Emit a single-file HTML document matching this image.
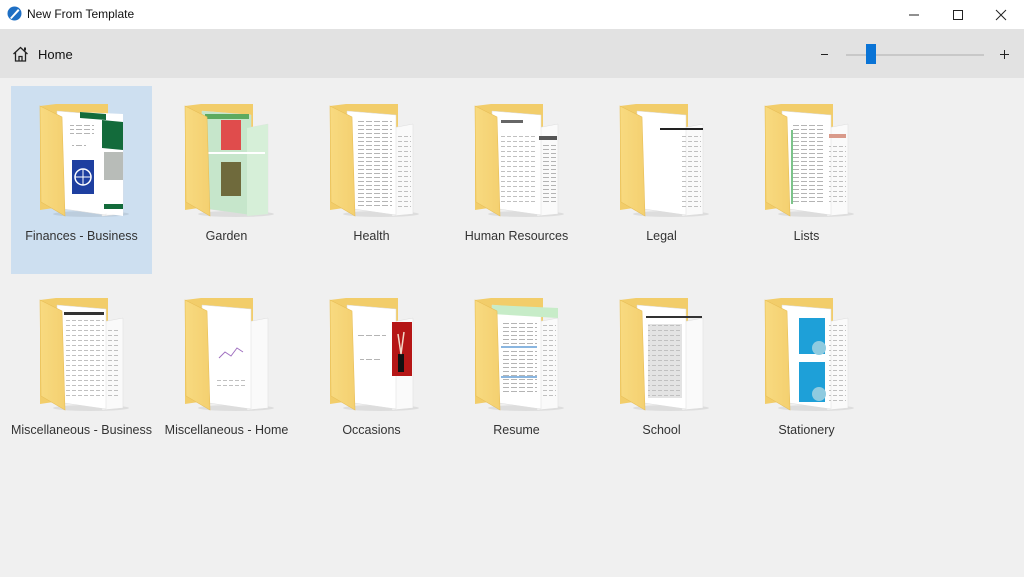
<!DOCTYPE html>
<html><head><meta charset="utf-8"><style>
*{margin:0;padding:0;box-sizing:border-box}
body{width:1024px;height:577px;background:#f0f0f0;font-family:"Segoe UI","Liberation Sans",sans-serif;overflow:hidden;position:relative;color:#222}
.title{position:absolute;left:0;top:0;width:1024px;height:29px;background:#fff}
.title .t{position:absolute;left:27px;top:7px;font-size:12px;color:#111}
.tb{position:absolute;left:0;top:29px;width:1024px;height:49px;background:#e2e2e2}
.tb .h{position:absolute;left:38px;top:18px;font-size:13px;color:#111}
.tile{position:absolute;width:141px;height:188px}
.sel{background:#cddff0}
.tile svg{position:absolute;left:25px;top:14px}
.lbl{position:absolute;left:-10px;width:161px;text-align:center;top:143px;font-size:12.5px;color:#333;white-space:nowrap}
</style></head><body>
<svg width="0" height="0" style="position:absolute">
<defs>
<pattern id="ln" width="8" height="4" patternUnits="userSpaceOnUse"><rect x="0" y="1" width="6" height="1" fill="#b4b4b4"/></pattern>
<pattern id="ln2" width="6" height="5" patternUnits="userSpaceOnUse"><rect x="0" y="1" width="4" height="1" fill="#c0c0c0"/></pattern>
<symbol id="back" viewBox="0 0 100 120"><path d="M4,6 L20,4 L72,4 L72,100 L4,110 Z" fill="#f2cd6a"/><ellipse cx="55" cy="114" rx="38" ry="3" fill="#000" opacity=".08"/></symbol>
<symbol id="pages" viewBox="0 0 100 120"><polygon points="66,28 87,24 87,114 66,116" fill="#fafafa" stroke="#ddd" stroke-width=".5"/><polygon points="21,11 70,15 70,115 21,108" fill="#fff" stroke="#ddd" stroke-width=".5"/></symbol>
<symbol id="front" viewBox="0 0 100 120"><defs><linearGradient id="fg" x1="0" x2="1"><stop offset="0" stop-color="#f8da80"/><stop offset="1" stop-color="#f4d070"/></linearGradient></defs><path d="M4,6 L26,17 L29,116 L5,102 Z" fill="url(#fg)" stroke="#e8bf58" stroke-width=".6"/></symbol>
</defs></svg>

<div class="title">
<svg style="position:absolute;left:7px;top:6px" width="15" height="15" viewBox="0 0 15 15"><circle cx="7.5" cy="7.5" r="7" fill="#1e6fc4"/><path d="M3,12 L11,3 L12.5,4.5 L4.5,13 Z" fill="#fff"/></svg>
<div class="t">New From Template</div>
<svg style="position:absolute;left:905px;top:8px" width="110" height="14"><line x1="4" y1="7" x2="14" y2="7" stroke="#222"/><rect x="48.5" y="2.5" width="9" height="9" fill="none" stroke="#222"/><path d="M91,2 L101,12 M101,2 L91,12" stroke="#222" stroke-width="1"/></svg>
</div>
<div class="tb">
<svg style="position:absolute;left:12px;top:17px" width="17" height="16" viewBox="0 0 17 16"><path d="M1.5,8 L8.5,1.5 L15.5,8 M3.5,6.5 V15 H13.5 V6.5 M7,15 V10.5 H10 V15" fill="none" stroke="#222" stroke-width="1.3"/><rect x="12" y="1.5" width="2" height="3" fill="#222"/></svg>
<div class="h">Home</div>
<div style="position:absolute;left:821px;top:25px;width:7px;height:1px;background:#222"></div>
<div style="position:absolute;left:846px;top:25px;width:138px;height:2px;background:#d0d0d0;border:1px solid #c8c8c8"></div>
<div style="position:absolute;left:866px;top:15px;width:10px;height:20px;background:#0a74d6"></div>
<div style="position:absolute;left:1000px;top:25px;width:9px;height:1px;background:#222"></div>
<div style="position:absolute;left:1004px;top:21px;width:1px;height:9px;background:#222"></div>
</div>

<div class="tile sel" style="left:11px;top:86px"><svg width="100" height="120" viewBox="0 0 100 120"><use href="#back"/><use href="#pages"/><polygon points="44,12 87,14 87,116 44,110" fill="#fff"/><polygon points="66,20 87,22 87,50 66,48" fill="#136b3b"/><polygon points="44,12 70,14 70,20 44,18" fill="#136b3b"/><rect x="68" y="52" width="19" height="28" fill="#b8bcb8"/><rect x="68" y="104" width="19" height="5" fill="#136b3b"/><rect x="36" y="60" width="22" height="34" fill="#1e3fa0"/><circle cx="47" cy="77" r="8" fill="none" stroke="#fff" stroke-width="1.5"/><path d="M39,77 H55 M47,69 V85" stroke="#fff"/><rect x="34" y="24" width="24" height="10" fill="url(#ln)"/><rect x="36" y="45" width="14" height="3" fill="url(#ln)"/><use href="#front"/></svg><div class="lbl">Finances - Business</div></div>

<div class="tile" style="left:156px;top:86px"><svg width="100" height="120" viewBox="0 0 100 120"><use href="#back"/><use href="#pages"/><polygon points="21,11 70,15 70,115 21,108" fill="#c6e6cb"/><polygon points="66,28 87,24 87,114 66,116" fill="#d6efd8"/><rect x="40" y="20" width="20" height="30" fill="#e04c4c"/><rect x="40" y="62" width="20" height="34" fill="#6f6a3c"/><rect x="24" y="14" width="44" height="5" fill="#5daa60"/><rect x="24" y="52" width="60" height="2" fill="#fff"/><use href="#front"/></svg><div class="lbl">Garden</div></div>

<div class="tile" style="left:301px;top:86px"><svg width="100" height="120" viewBox="0 0 100 120"><use href="#back"/><use href="#pages"/><rect x="30" y="20" width="36" height="86" fill="url(#ln)"/><rect x="70" y="34" width="15" height="76" fill="url(#ln2)"/><use href="#front"/></svg><div class="lbl">Health</div></div>

<div class="tile" style="left:446px;top:86px"><svg width="100" height="120" viewBox="0 0 100 120"><use href="#back"/><use href="#pages"/><rect x="30" y="36" width="36" height="70" fill="url(#ln2)"/><rect x="30" y="20" width="22" height="3" fill="#666"/><rect x="68" y="36" width="18" height="4" fill="#555"/><rect x="70" y="42" width="15" height="60" fill="url(#ln)"/><use href="#front"/></svg><div class="lbl">Human Resources</div></div>

<div class="tile" style="left:591px;top:86px"><svg width="100" height="120" viewBox="0 0 100 120"><use href="#back"/><use href="#pages"/><rect x="44" y="28" width="43" height="2" fill="#222"/><rect x="66" y="34" width="19" height="76" fill="url(#ln2)"/><use href="#front"/></svg><div class="lbl">Legal</div></div>

<div class="tile" style="left:736px;top:86px"><svg width="100" height="120" viewBox="0 0 100 120"><use href="#back"/><use href="#pages"/><rect x="30" y="24" width="34" height="80" fill="url(#ln)"/><rect x="30" y="30" width="2" height="74" fill="#7cc48a"/><rect x="68" y="34" width="17" height="4" fill="#d99a8a"/><rect x="68" y="44" width="17" height="60" fill="url(#ln2)"/><use href="#front"/></svg><div class="lbl">Lists</div></div>

<div class="tile" style="left:11px;top:280px"><svg width="100" height="120" viewBox="0 0 100 120"><use href="#back"/><use href="#pages"/><rect x="28" y="18" width="40" height="3" fill="#333"/><rect x="28" y="26" width="40" height="78" fill="url(#ln2)"/><rect x="70" y="34" width="14" height="70" fill="url(#ln2)"/><use href="#front"/></svg><div class="lbl">Miscellaneous - Business</div></div>

<div class="tile" style="left:156px;top:280px"><svg width="100" height="120" viewBox="0 0 100 120"><use href="#back"/><use href="#pages"/><path d="M38,64 L44,58 L50,62 L56,54 L62,58" stroke="#a070c0" fill="none"/><rect x="34" y="82" width="30" height="10" fill="url(#ln2)"/><use href="#front"/></svg><div class="lbl">Miscellaneous - Home</div></div>

<div class="tile" style="left:301px;top:280px"><svg width="100" height="120" viewBox="0 0 100 120"><use href="#back"/><use href="#pages"/><rect x="66" y="28" width="20" height="54" fill="#b51616"/><rect x="72" y="60" width="6" height="18" fill="#111"/><path d="M75,60 L72,40 M75,60 L78,38" stroke="#f3d8c8" stroke-width="1.5"/><rect x="30" y="38" width="30" height="4" fill="url(#ln)"/><rect x="34" y="62" width="22" height="6" fill="url(#ln)"/><use href="#front"/></svg><div class="lbl">Occasions</div></div>

<div class="tile" style="left:446px;top:280px"><svg width="100" height="120" viewBox="0 0 100 120"><use href="#back"/><use href="#pages"/><polygon points="21,11 87,14 87,24 21,20" fill="#c7ecc8"/><rect x="30" y="26" width="36" height="74" fill="url(#ln)"/><rect x="30" y="52" width="36" height="2" fill="#8ab6e0"/><rect x="30" y="82" width="36" height="2" fill="#8ab6e0"/><rect x="70" y="30" width="15" height="76" fill="url(#ln2)"/><use href="#front"/></svg><div class="lbl">Resume</div></div>

<div class="tile" style="left:591px;top:280px"><svg width="100" height="120" viewBox="0 0 100 120"><use href="#back"/><use href="#pages"/><rect x="30" y="22" width="56" height="2" fill="#333"/><rect x="32" y="30" width="34" height="74" fill="#e3e3e3"/><rect x="32" y="30" width="34" height="74" fill="url(#ln2)"/><use href="#front"/></svg><div class="lbl">School</div></div>

<div class="tile" style="left:736px;top:280px"><svg width="100" height="120" viewBox="0 0 100 120"><use href="#back"/><use href="#pages"/><rect x="38" y="24" width="26" height="36" fill="#1ea0d8"/><rect x="38" y="68" width="26" height="40" fill="#1ea0d8"/><circle cx="58" cy="54" r="7" fill="#8fcbe0"/><circle cx="58" cy="100" r="7" fill="#8fcbe0"/><rect x="68" y="28" width="17" height="80" fill="url(#ln2)"/><use href="#front"/></svg><div class="lbl">Stationery</div></div>
</body></html>
